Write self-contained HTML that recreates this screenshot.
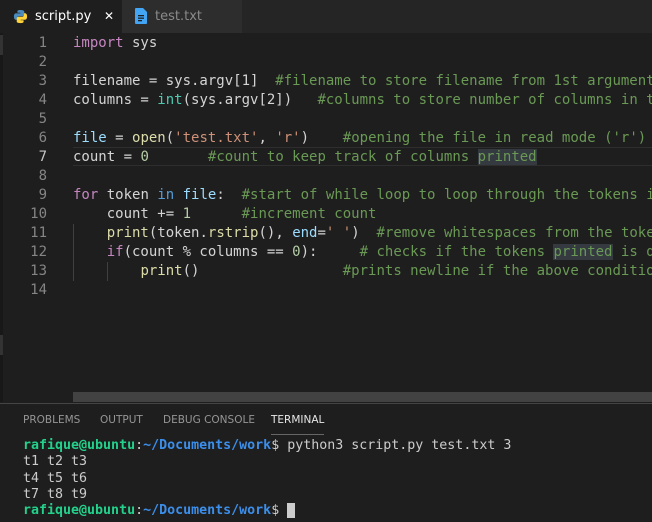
<!DOCTYPE html>
<html><head><style>
*{margin:0;padding:0;box-sizing:border-box}
body{width:652px;height:522px;background:#1e1e1e;overflow:hidden;position:relative;font-family:"DejaVu Sans Mono","Liberation Mono",monospace}
.tabs{position:absolute;left:0;top:0;width:652px;height:33px;background:#252526}
.tab{position:absolute;top:0;height:33px;font-family:"DejaVu Sans","Liberation Sans",sans-serif;font-size:13px;line-height:33px}
.t1{left:0;width:122px;background:#1e1e1e;color:#fff}
.t2{left:122px;width:120px;background:#2d2d2d;color:#8a8a8a}
.strip{position:absolute;left:0;top:33px;width:3px;height:369px;background:#181818}
.code{position:absolute;left:0;top:34px;width:652px;font-size:14px;line-height:19px;white-space:pre;color:#d4d4d4}
.ln{position:absolute;width:47px;text-align:right;color:#858585}
.l{position:absolute;left:73px}
.k{color:#c586c0}.b{color:#569cd6}.f{color:#dcdcaa}.t{color:#4ec9b0}.s{color:#ce9178}.c{color:#6a9955}.n{color:#b5cea8}.v{color:#9cdcfe}
.hl{background:#343a40}
.panel{position:absolute;left:0;top:403px;width:652px;height:119px;border-top:1px solid #444}
.ptab{position:absolute;top:10px;font-family:"DejaVu Sans","Liberation Sans",sans-serif;font-size:10.5px;color:#969696}
.term{position:absolute;left:23px;top:34px;font-size:13.3px;line-height:16.3px;white-space:pre;color:#ccc}
.g{color:#23d18b;font-weight:bold}.bl{color:#3b8eea;font-weight:bold}
</style></head><body>
<div class="tabs">
 <div class="tab t1"><svg style="position:absolute;left:13px;top:9px" width="15" height="15" viewBox="0 0 16 16"><path d="M7.8 1C4.5 1 4.7 2.4 4.7 2.4V4h3.2v.6H3.4S1 4.3 1 8s2.1 3.5 2.1 3.5h1.3V9.8s-.1-2.1 2.1-2.1h3.5s2 0 2-2V2.8S12.3 1 7.8 1z" fill="#4b8bbe"/><path d="M8.2 15c3.3 0 3.1-1.4 3.1-1.4V12H8.1v-.6h4.5S15 11.7 15 8s-2.1-3.5-2.1-3.5h-1.3v1.7s.1 2.1-2.1 2.1H6s-2 0-2 2v3.1S3.700 15 8.2 15z" fill="#ffd43b"/></svg><span style="position:absolute;left:35px">script.py</span><span style="position:absolute;left:104px;font-weight:bold;font-size:12px">✕</span></div>
 <div class="tab t2"><svg style="position:absolute;left:13px;top:8px" width="12" height="16" viewBox="0 0 12 16"><path d="M1 0h7l4 4v11a1 1 0 0 1-1 1H1a1 1 0 0 1-1-1V1a1 1 0 0 1 1-1z" fill="#42a5f5"/><rect x="3" y="7" width="6" height="1.3" fill="#1e1e1e"/><rect x="3" y="9.5" width="6" height="1.3" fill="#1e1e1e"/><rect x="3" y="12" width="4" height="1.3" fill="#1e1e1e"/></svg><span style="position:absolute;left:33px">test.txt</span></div>
</div>
<div class="strip"></div>
<div style="position:absolute;left:0;top:35px;width:3px;height:20px;background:#333"></div>
<div style="position:absolute;left:0;top:335px;width:3px;height:20px;background:#333"></div>
<div style="position:absolute;left:73px;top:147px;width:579px;height:19px;border-top:1px solid #2e2e2e;border-bottom:1px solid #2e2e2e"></div>
<div style="position:absolute;left:73px;top:224px;width:1px;height:57px;background:#404040"></div>
<div style="position:absolute;left:107px;top:262px;width:1px;height:19px;background:#404040"></div>
<div class="code">
<div class="ln" style="top:0">1</div><div class="l" style="top:0"><span class="k">import</span> sys</div>
<div class="ln" style="top:19px">2</div>
<div class="ln" style="top:38px">3</div><div class="l" style="top:38px">filename = sys.argv[1]  <span class="c">#filename to store filename from 1st argument</span></div>
<div class="ln" style="top:57px">4</div><div class="l" style="top:57px">columns = <span class="t">int</span>(sys.argv[2])   <span class="c">#columns to store number of columns in the</span></div>
<div class="ln" style="top:76px">5</div>
<div class="ln" style="top:95px">6</div><div class="l" style="top:95px"><span class="v">file</span> = <span class="f">open</span>(<span class="s">'test.txt'</span>, <span class="s">'r'</span>)    <span class="c">#opening the file in read mode ('r')</span></div>
<div class="ln" style="top:114px;color:#c6c6c6">7</div><div class="l" style="top:114px">count = <span class="n">0</span>       <span class="c">#count to keep track of columns <span class="hl">printed</span></span></div>
<div class="ln" style="top:133px">8</div>
<div class="ln" style="top:152px">9</div><div class="l" style="top:152px"><span class="k">for</span> token <span class="b">in</span> <span class="v">file</span>:  <span class="c">#start of while loop to loop through the tokens in</span></div>
<div class="ln" style="top:171px">10</div><div class="l" style="top:171px">    count += <span class="n">1</span>      <span class="c">#increment count</span></div>
<div class="ln" style="top:190px">11</div><div class="l" style="top:190px">    <span class="f">print</span>(token.<span class="f">rstrip</span>(), <span class="v">end</span>=<span class="s">' '</span>)  <span class="c">#remove whitespaces from the token</span></div>
<div class="ln" style="top:209px">12</div><div class="l" style="top:209px">    <span class="k">if</span>(count % columns == <span class="n">0</span>):     <span class="c"># checks if the tokens <span class="hl">printed</span> is di</span></div>
<div class="ln" style="top:228px">13</div><div class="l" style="top:228px">        <span class="f">print</span>()                 <span class="c">#prints newline if the above condition</span></div>
<div class="ln" style="top:247px">14</div>
</div>
<div style="position:absolute;left:73px;top:392px;width:579px;height:10px;background:#424242"></div>
<div class="panel">
 <div class="ptab" style="left:23px">PROBLEMS</div>
 <div class="ptab" style="left:100px">OUTPUT</div>
 <div class="ptab" style="left:163px">DEBUG CONSOLE</div>
 <div class="ptab" style="left:271px;color:#e7e7e7">TERMINAL</div>
 <div style="position:absolute;left:271px;top:30px;width:53px;height:1px;background:#666"></div>
 <div class="term"><span class="g">rafique@ubuntu</span>:<span class="bl">~/Documents/work</span>$ python3 script.py test.txt 3
t1 t2 t3
t4 t5 t6
t7 t8 t9
<span class="g">rafique@ubuntu</span>:<span class="bl">~/Documents/work</span>$ <span style="background:#ccc"> </span></div>
</div>
</body></html>
